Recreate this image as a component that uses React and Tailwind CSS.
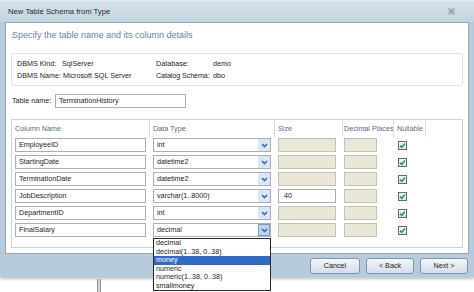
import React from "react";

const rows = [
  { name: "EmployeeID", type: "int", size: "", sizeOn: false },
  { name: "StartingDate", type: "datetime2", size: "", sizeOn: false },
  { name: "TerminationDate", type: "datetime2", size: "", sizeOn: false },
  { name: "JobDescription", type: "varchar(1..8000)", size: "40", sizeOn: true },
  { name: "DepartmentID", type: "int", size: "", sizeOn: false },
  { name: "FinalSalary", type: "decimal", size: "", sizeOn: false, open: true },
];

const options = [
  "decimal",
  "decimal(1..38, 0..38)",
  "money",
  "numeric",
  "numeric(1..38, 0..38)",
  "smallmoney",
];

function Chevron() {
  return (
    <svg width="7" height="5" viewBox="0 0 7 5">
      <path d="M1 1 L3.5 3.6 L6 1" stroke="#3a6db3" strokeWidth="1.6" fill="none" />
    </svg>
  );
}

function Check() {
  return (
    <div className="w-[9px] h-[9px] border border-[#52708e] bg-gradient-to-b from-[#f4f6f8] to-[#dfe5ea] flex items-center justify-center">
      <svg width="7" height="7" viewBox="0 0 7 7">
        <path d="M1 3.6 L2.8 5.3 L6 1.5" stroke="#2c9a3c" strokeWidth="1.5" fill="none" />
      </svg>
    </div>
  );
}

export default function App() {
  return (
    <div className="w-[474px] h-[292px] bg-white overflow-hidden whitespace-nowrap font-['Liberation_Sans',Arial,sans-serif] text-[#1c1c1c] text-[7.2px] leading-[12px]">
      <div className="w-[474px] bg-[#b8cbdc] shadow-[0_2px_3px_rgba(0,0,0,0.25)] flex flex-col">
        {/* title bar */}
        <div className="h-[22px] flex items-center justify-between pl-[8px] pr-[19px] bg-gradient-to-b from-[#d6e1eb] to-[#c3d3e1] border-t border-[#e2eaf1]">
          <span className="text-[7.7px] text-[#1e2a36]">New Table Schema from Type</span>
          <svg width="7" height="7" viewBox="0 0 7 7">
            <rect x="0.5" y="0.5" width="6" height="6" fill="none" stroke="#b3bfca" strokeWidth="0.8" />
            <path d="M1.3 1.3 L5.7 5.7 M5.7 1.3 L1.3 5.7" stroke="#7d8b98" strokeWidth="1.2" />
          </svg>
        </div>

        {/* content panel */}
        <div className="mx-[5px] bg-white border border-[#93a9bd] px-[5px] pt-[6px] pb-[5px]">
          <div className="pl-[1px] text-[9px] text-[#5f86ab]">Specify the table name and its column details</div>

          <div className="mt-[12px] border border-[#dce2e8] rounded-[2px] pt-[4px] pb-[3px] pl-[5px] grid grid-cols-[45px_94px_57px_1fr]">
            <span>DBMS Kind:</span>
            <span>SqlServer</span>
            <span>Database:</span>
            <span>demo</span>
            <span className="col-span-2">DBMS Name: Microsoft SQL Server</span>
            <span className="tracking-[-0.1px]">Catalog Schema:</span>
            <span>dbo</span>
          </div>

          <div className="mt-[8px] flex items-center">
            <span className="w-[44px] pl-[1px]">Table name:</span>
            <div className="w-[131px] h-[14px] border border-[#a7afb7] flex items-center pl-[3px]">TerminationHistory</div>
          </div>

          <div className="mt-[11px] border border-[#cad3dc] pb-[10px]">
            <div className="h-[17px] flex text-[#5e6b79]">
              <div className="w-[138px] border-r border-[#d5dde4] pl-[3px] flex items-center">Column Name</div>
              <div className="w-[125px] border-r border-[#d5dde4] pl-[3px] flex items-center">Data Type</div>
              <div className="w-[68px] border-r border-[#d5dde4] pl-[3px] flex items-center">Size</div>
              <div className="w-[51px] border-r border-[#d5dde4] pl-[1px] flex items-center overflow-hidden">Decimal Places</div>
              <div className="w-[32px] border-r border-[#d5dde4] pl-[3px] flex items-center">Nullable</div>
              <div className="flex-1" />
            </div>
            <div className="pt-[1px] flex flex-col gap-[3px]">
              {rows.map((r) => (
                <div key={r.name} className="h-[14px] flex">
                  <div className="w-[138px] pl-[3px]">
                    <div className="w-[131px] h-[14px] border border-[#a7afb7] flex items-center pl-[3px]">{r.name}</div>
                  </div>
                  <div className="w-[125px] pl-[3px]">
                    <div className="relative w-[118px] h-[14px] border border-[#a7afb7] flex items-center pl-[3px]">
                      <span className="flex-1">{r.type}</span>
                      <div
                        className={
                          r.open
                            ? "w-[12px] h-[12px] bg-[#bcd2ec] border border-[#7c9fcb] flex items-center justify-center"
                            : "w-[12px] h-[12px] bg-[#dce7f5] flex items-center justify-center"
                        }
                      >
                        <Chevron />
                      </div>
                      {r.open && (
                        <div className="absolute z-10 left-[-1px] top-[14px] w-[118px] bg-white border border-[#2a2a2a] text-[7.2px] leading-[8.5px]">
                          {options.map((o) => (
                            <div
                              key={o}
                              className={
                                o === "money"
                                  ? "h-[8.5px] pl-[2px] bg-[#3169c6] text-white"
                                  : "h-[8.5px] pl-[2px]"
                              }
                            >
                              {o}
                            </div>
                          ))}
                        </div>
                      )}
                    </div>
                  </div>
                  <div className="w-[68px] pl-[3px]">
                    <div
                      className={
                        r.sizeOn
                          ? "w-[58px] h-[14px] border border-[#a7afb7] bg-white flex items-center pl-[5px]"
                          : "w-[58px] h-[14px] border border-[#c7c3b3] bg-[#ebe7d9]"
                      }
                    >
                      {r.size}
                    </div>
                  </div>
                  <div className="w-[51px] pl-[1px]">
                    <div className="w-[33px] h-[14px] border border-[#c7c3b3] bg-[#ebe7d9]" />
                  </div>
                  <div className="w-[32px] pl-[4px] flex items-center">
                    <Check />
                  </div>
                </div>
              ))}
            </div>
          </div>
        </div>

        {/* buttons */}
        <div className="h-[23px] flex justify-end items-start pt-[4px] pr-[6px] gap-[6px]">
          {[["Cancel", "w-[50px]"], ["< Back", "w-[48px]"], ["Next >", "w-[48px]"]].map(([t, w]) => (
            <div
              key={t}
              className={`${w} h-[16px] rounded-[3px] border border-[#7f95ab] bg-gradient-to-b from-[#f3f6f9] to-[#d3dee8] flex items-center justify-center text-[#222]`}
            >
              {t}
            </div>
          ))}
        </div>
      </div>

      <div className="ml-[97px] mt-[2px] w-[4px] h-[20px] border-x border-[#8c8c8c] bg-[#d6d6d6]" />
    </div>
  );
}
